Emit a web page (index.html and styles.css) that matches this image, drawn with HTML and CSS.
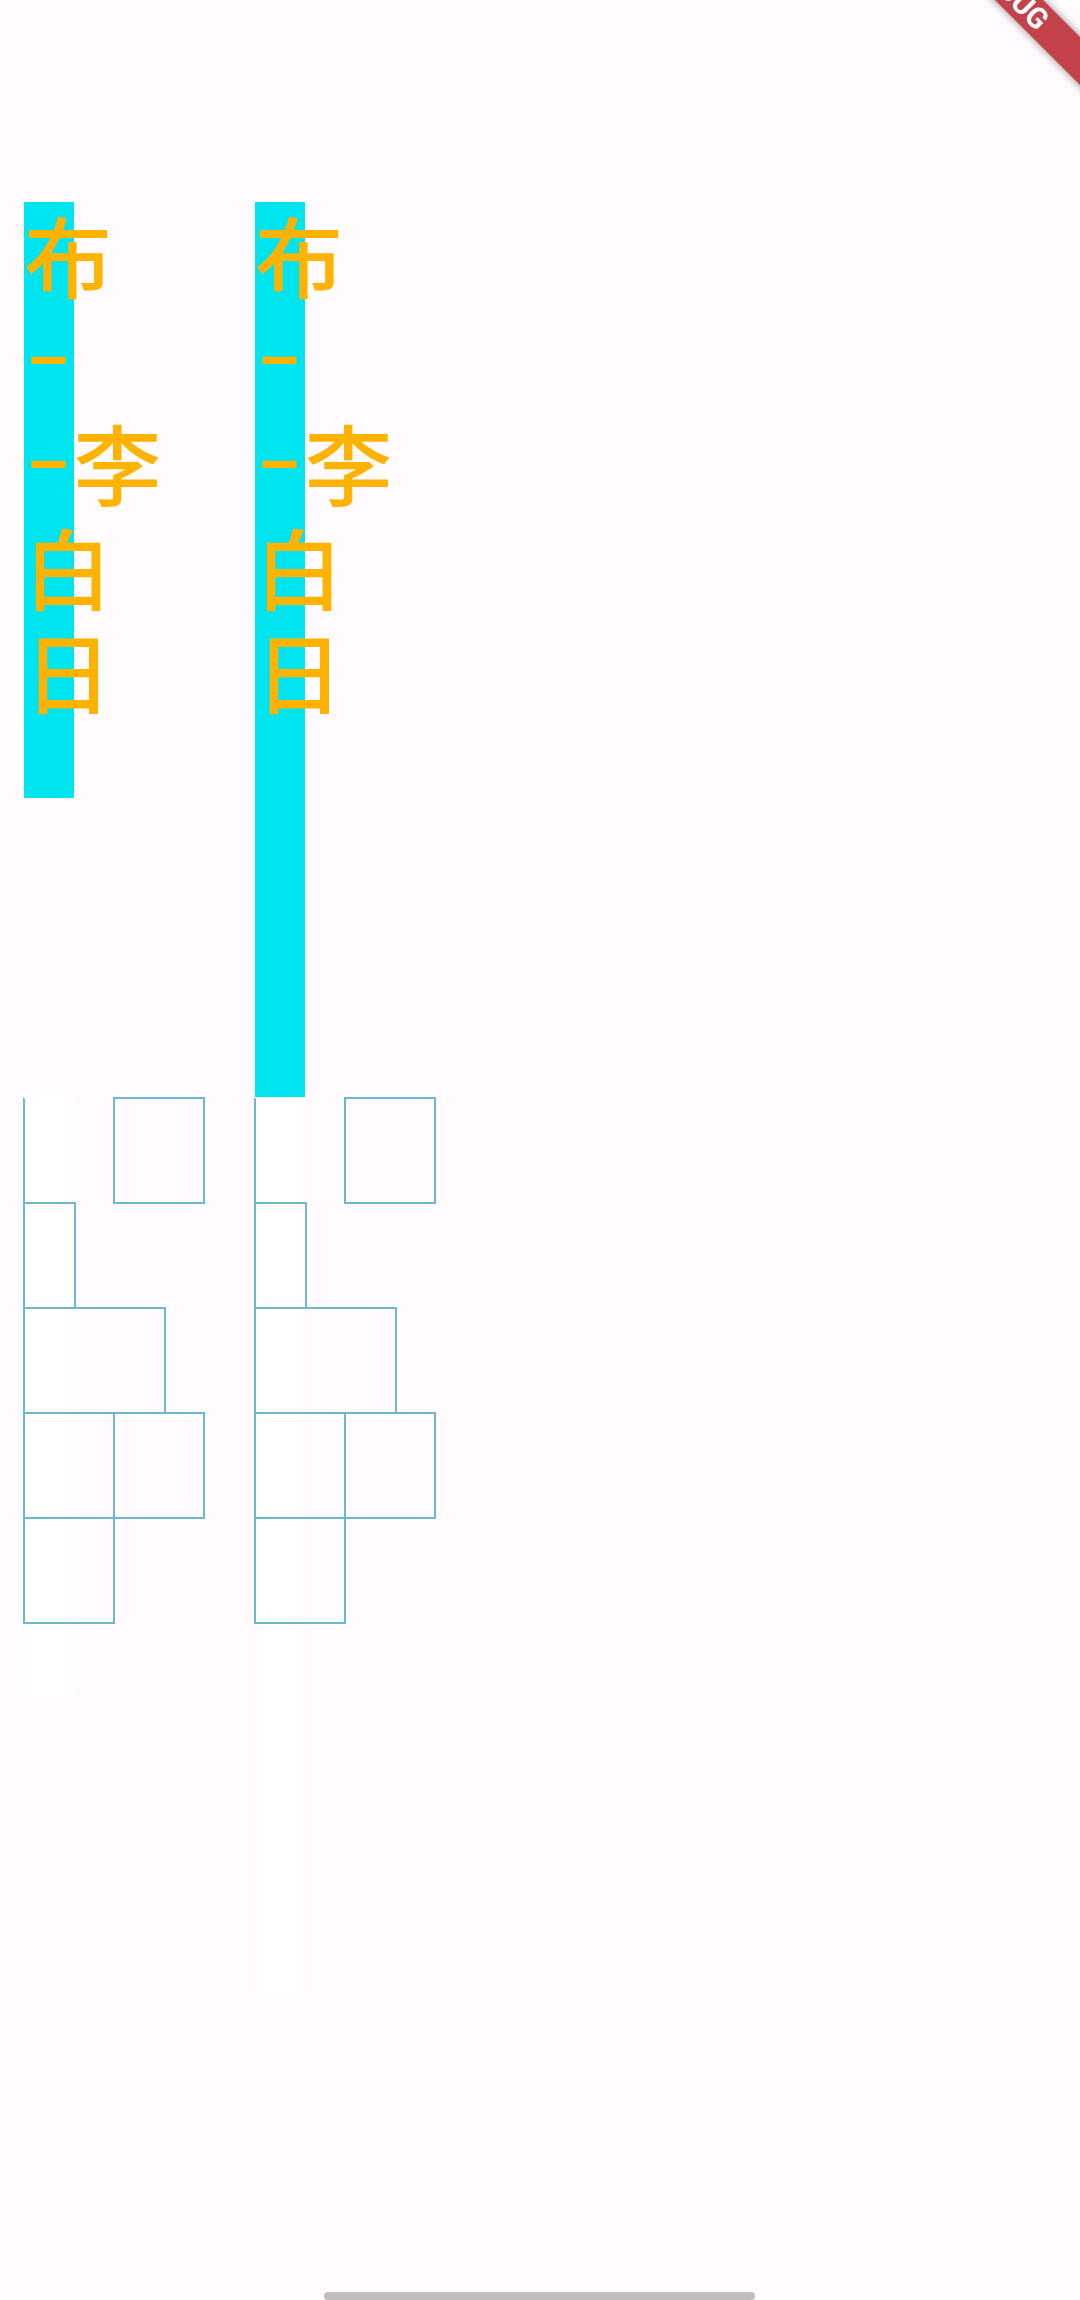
FILE: index.html
```html
<!DOCTYPE html>
<html lang="zh">
<head>
<meta charset="utf-8">
<title>Layout demo</title>
<link rel="stylesheet" href="styles.css">
</head>
<body>
<div class="screen">
  <div class="page">
    <div class="row">
      <div class="col">
        <div class="bar bar-short"><p class="poem">布<br><span class="dash">-</span><br><span class="dash">-</span> 李<br>白<br>日</p></div>
      </div>
      <div class="col">
        <div class="bar bar-tall"><p class="poem">布<br><span class="dash">-</span><br><span class="dash">-</span> 李<br>白<br>日</p></div>
      </div>
    </div>
    <div class="row">
      <div class="col stack">
        <div class="sheet sheet-short"></div>
        <div class="boxes">
          <div class="brow"><div class="box box-edge w90"></div><div class="box w90 join"></div></div>
          <div class="brow"><div class="box w51"></div></div>
          <div class="brow"><div class="box w140"></div></div>
          <div class="brow"><div class="box w90"></div><div class="box w90 join"></div></div>
          <div class="brow"><div class="box w90"></div></div>
        </div>
      </div>
      <div class="col stack">
        <div class="sheet sheet-tall"></div>
        <div class="boxes">
          <div class="brow"><div class="box box-edge w90"></div><div class="box w90 join"></div></div>
          <div class="brow"><div class="box w51"></div></div>
          <div class="brow"><div class="box w140"></div></div>
          <div class="brow"><div class="box w90"></div><div class="box w90 join"></div></div>
          <div class="brow"><div class="box w90"></div></div>
        </div>
      </div>
    </div>
  </div>
  <div class="debug-banner"><span>DEBUG</span></div>
  <div class="home-indicator"></div>
</div>
</body>
</html>
```

FILE: styles.css
```css
html, body {
  margin: 0;
  padding: 0;
}

body {
  width: 1080px;
  height: 2300px;
  overflow: hidden;
  background: #fffbfe;
  font-family: Roboto, "Noto Sans CJK SC", sans-serif;
}

.screen {
  position: relative;
  width: 1080px;
  height: 2300px;
  overflow: hidden;
}

.page {
  padding: 202px 0 0 24px;
}

.row {
  display: flex;
  align-items: flex-start;
}

.col {
  flex: none;
  width: 231px;
}

.bar {
  width: 50px;
  background: #00e4ef;
}

.bar-short {
  height: 596px;
}

.bar-tall {
  height: 895px;
}

.poem {
  margin: 0;
  padding-top: 7px;
  font-size: 88px;
  font-weight: 500;
  line-height: 104px;
  color: #ffb300;
  white-space: nowrap;
}

.dash {
  font-family: Roboto, sans-serif;
  font-size: 145px;
  font-weight: 300;
  line-height: 0;
  letter-spacing: -18px;
  margin-left: 4px;
  vertical-align: -11px;
}

.stack {
  display: grid;
}

.stack > * {
  grid-area: 1 / 1;
}

.sheet {
  width: 50px;
  background: #ffffff;
}

.sheet-short {
  height: 598px;
}

.sheet-tall {
  height: 897px;
}

.boxes {
  align-self: start;
  margin-left: -1px;
}

.brow {
  display: flex;
  height: 105px;
}

.box {
  flex: none;
  box-sizing: border-box;
  height: 107px;
  border: 2px solid #6cb8d0;
}

.box-edge {
  border-top-color: transparent;
  border-right-color: transparent;
  border-bottom-color: transparent;
}

.join {
  margin-left: -2px;
}

.w51 { width: 53px; }
.w90 { width: 92px; }
.w140 { width: 143px; }

.debug-banner {
  position: absolute;
  left: 861px;
  top: -25px;
  width: 300px;
  height: 34px;
  transform: rotate(45deg);
  background: #c4434b;
  box-shadow: 0 0 8px rgba(0, 0, 0, 0.45);
  color: #ffffff;
  display: flex;
  align-items: center;
  justify-content: center;
  font-family: Roboto, sans-serif;
  font-weight: bold;
  font-size: 29px;
  line-height: 1;
}

.home-indicator {
  position: absolute;
  left: 324px;
  top: 2292px;
  width: 431px;
  height: 8px;
  border-radius: 4px;
  background: #c0bdbe;
}
```
